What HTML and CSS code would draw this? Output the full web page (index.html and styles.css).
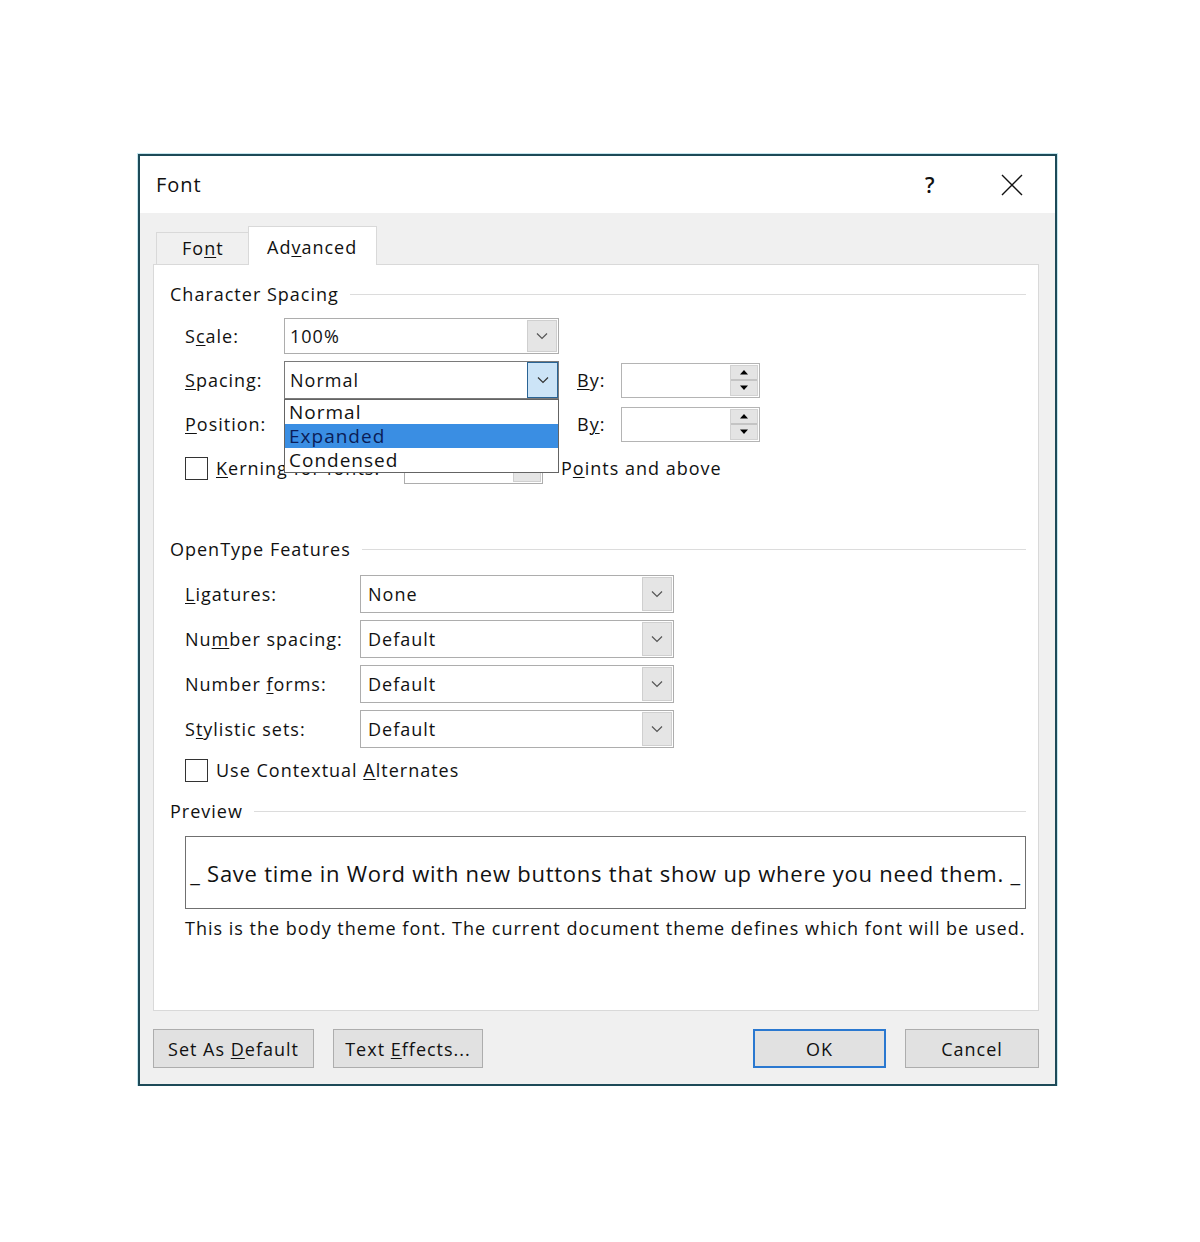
FILE: index.html
```html
<!DOCTYPE html>
<html>
<head>
<meta charset="utf-8">
<title>Font</title>
<link rel="stylesheet" href="styles.css">
</head>
<body>
<div class="dialog">
  <div class="titlebar">
    <span class="title">Font</span>
    <span class="help">?</span>
    <span class="close">
      <svg width="22" height="22" viewBox="0 0 22 22"><path d="M1 1 L21 21 M21 1 L1 21" stroke="#111" stroke-width="1.4" fill="none"/></svg>
    </span>
  </div>
  <div class="body">
    <div class="tabs">
      <div class="tab">Fo<u>n</u>t</div>
      <div class="tab active">Ad<u>v</u>anced</div>
    </div>
    <div class="panel">
      <div class="group-head"><span>Character Spacing</span><i class="rule"></i></div>
      <div class="rows cs">
        <div class="row">
          <span class="lbl lbl-cs">S<u>c</u>ale:</span>
          <div class="combo combo-cs"><span class="val">100%</span><span class="dd"><svg width="12" height="8" viewBox="0 0 12 8"><path d="M1 1.5 L6 6.5 L11 1.5" stroke="#555" stroke-width="1.2" fill="none"/></svg></span></div>
        </div>
        <div class="row spacing-row">
          <span class="lbl lbl-cs"><u>S</u>pacing:</span>
          <div class="combo combo-cs focused"><span class="val">Normal</span><span class="dd"><svg width="12" height="8" viewBox="0 0 12 8"><path d="M1 1.5 L6 6.5 L11 1.5" stroke="#333" stroke-width="1.2" fill="none"/></svg></span></div>
          <span class="by"><u>B</u>y:</span>
          <div class="spin"><span class="spin-val"></span><span class="spin-btns"><span class="sb"><svg width="10" height="6" viewBox="0 0 10 6"><path d="M1 5.5 L5 1 L9 5.5 Z" fill="#000"/></svg></span><span class="sb"><svg width="10" height="6" viewBox="0 0 10 6"><path d="M1 0.5 L5 5 L9 0.5 Z" fill="#000"/></svg></span></span></div>
          <div class="droplist">
            <div class="item">Normal</div>
            <div class="item sel">Expanded</div>
            <div class="item">Condensed</div>
          </div>
        </div>
        <div class="row">
          <span class="lbl lbl-cs"><u>P</u>osition:</span>
          <div class="combo combo-cs"><span class="val"></span><span class="dd"></span></div>
          <span class="by">B<u>y</u>:</span>
          <div class="spin"><span class="spin-val"></span><span class="spin-btns"><span class="sb"><svg width="10" height="6" viewBox="0 0 10 6"><path d="M1 5.5 L5 1 L9 5.5 Z" fill="#000"/></svg></span><span class="sb"><svg width="10" height="6" viewBox="0 0 10 6"><path d="M1 0.5 L5 5 L9 0.5 Z" fill="#000"/></svg></span></span></div>
        </div>
        <div class="row">
          <span class="check"></span>
          <span class="kern-lbl"><u>K</u>erning for fonts:</span>
          <div class="combo combo-kern"><span class="val"></span><span class="dd dd-dark"><svg width="10" height="6" viewBox="0 0 10 6"><path d="M1 0.5 L5 5 L9 0.5 Z" fill="#000"/></svg></span></div>
          <span class="pts">P<u>o</u>ints and above</span>
        </div>
      </div>

      <div class="group-head gh-ot"><span>OpenType Features</span><i class="rule"></i></div>
      <div class="rows ot">
        <div class="row row-ot">
          <span class="lbl lbl-ot"><u>L</u>igatures:</span>
          <div class="combo combo-ot"><span class="val">None</span><span class="dd"><svg width="12" height="8" viewBox="0 0 12 8"><path d="M1 1.5 L6 6.5 L11 1.5" stroke="#555" stroke-width="1.2" fill="none"/></svg></span></div>
        </div>
        <div class="row row-ot">
          <span class="lbl lbl-ot">Nu<u>m</u>ber spacing:</span>
          <div class="combo combo-ot"><span class="val">Default</span><span class="dd"><svg width="12" height="8" viewBox="0 0 12 8"><path d="M1 1.5 L6 6.5 L11 1.5" stroke="#555" stroke-width="1.2" fill="none"/></svg></span></div>
        </div>
        <div class="row row-ot">
          <span class="lbl lbl-ot">Number <u>f</u>orms:</span>
          <div class="combo combo-ot"><span class="val">Default</span><span class="dd"><svg width="12" height="8" viewBox="0 0 12 8"><path d="M1 1.5 L6 6.5 L11 1.5" stroke="#555" stroke-width="1.2" fill="none"/></svg></span></div>
        </div>
        <div class="row row-ot">
          <span class="lbl lbl-ot">S<u>t</u>ylistic sets:</span>
          <div class="combo combo-ot"><span class="val">Default</span><span class="dd"><svg width="12" height="8" viewBox="0 0 12 8"><path d="M1 1.5 L6 6.5 L11 1.5" stroke="#555" stroke-width="1.2" fill="none"/></svg></span></div>
        </div>
        <div class="row row-ctx">
          <span class="check"></span>
          <span class="ctx-lbl">Use Contextual <u>A</u>lternates</span>
        </div>
      </div>

      <div class="group-head gh-pv"><span>Preview</span><i class="rule"></i></div>
      <div class="preview">_ Save time in Word with new buttons that show up where you need them. _</div>
      <div class="desc">This is the body theme font. The current document theme defines which font will be used.</div>
    </div>

    <div class="buttons">
      <button class="btn btn-default">Set As <u>D</u>efault</button>
      <button class="btn btn-effects">Text <u>E</u>ffects...</button>
      <span class="spacer"></span>
      <button class="btn btn-ok">OK</button>
      <button class="btn btn-cancel">Cancel</button>
    </div>
  </div>
</div>
</body>
</html>
```

FILE: styles.css
```css
* { box-sizing: border-box; }
html, body { margin: 0; padding: 0; background: #fff; }
body {
  font-family: "Open Sans", "Noto Sans", sans-serif;
  font-size: 18px;
  letter-spacing: 1px;
  color: #111;
}
u { text-decoration: underline; text-underline-offset: 2px; text-decoration-thickness: 1px; }

.dialog {
  margin: 154px 0 0 138px;
  width: 919px;
  height: 932px;
  border: 2px solid #1d4a58;
  box-shadow: 0 0 0 1px #c5e6ee;
  display: flex;
  flex-direction: column;
  background: #f0f0f0;
}

.titlebar {
  height: 57px;
  background: #fff;
  display: flex;
  align-items: center;
  padding-left: 16px;
  flex-shrink: 0;
}
.title { font-size: 20px; flex: 1; }
.help { font-size: 21px; font-weight: 600; width: 20px; margin-right: 56px; letter-spacing: 0; }
.close { width: 22px; height: 22px; margin-right: 32px; display: flex; }

.body {
  flex: 1;
  display: flex;
  flex-direction: column;
  padding: 13px 16px 16px 13px;
}

.tabs {
  display: flex;
  align-items: flex-end;
  height: 38px;
  padding-left: 3px;
  position: relative;
  z-index: 2;
}
.tab {
  height: 32px;
  width: 92px;
  border: 1px solid #d9d9d9;
  border-bottom: none;
  border-right: none;
  background: #f0f0f0;
  display: flex;
  align-items: center;
  padding-left: 25px;
  padding-bottom: 2px;
}
.tab.active {
  height: 39px;
  width: 129px;
  background: #fff;
  border-right: 1px solid #d9d9d9;
  padding-left: 18px;
  margin-bottom: -1px;
  padding-top: 1px;
  padding-bottom: 0;
}

.panel {
  height: 747px;
  background: #fff;
  border: 1px solid #d9d9d9;
  padding: 15px 12px 0 16px;
  display: flex;
  flex-direction: column;
}

.group-head {
  height: 28px;
  display: flex;
  align-items: center;
}
.group-head .rule {
  flex: 1;
  border-top: 1px solid #dcdcdc;
  margin-left: 11px;
}
.gh-ot { margin-top: 45px; }
.gh-pv { margin-top: 8px; }

.rows { padding-left: 15px; }
.rows.cs { margin-top: 6px; }
.rows.ot { margin-top: 8px; }

.row {
  height: 44px;
  display: flex;
  align-items: center;
  position: relative;
}
.row-ot { height: 45px; }
.row-ctx { height: 38px; }

.lbl-cs { width: 99px; }
.lbl-ot { width: 175px; }

.combo {
  display: flex;
  height: 36px;
  border: 1px solid #adadad;
  background: #fff;
  align-items: stretch;
}
.combo .val {
  flex: 1;
  display: flex;
  align-items: center;
  padding-left: 5px;
}
.combo .dd {
  width: 30px;
  background: #e5e5e5;
  border: 1px solid #cfcfcf;
  margin: 1px;
  display: flex;
  align-items: center;
  justify-content: center;
}
.combo-cs { width: 275px; }
.combo-cs.focused { border-color: #7a7a7a; height: 38px; }
.combo-cs.focused .dd {
  background: #cce4f7;
  border: 1px solid #2a6495;
  margin: 0;
  width: 31px;
}
.combo-ot { width: 314px; height: 38px; padding-left: 2px; }

.by { width: 44px; margin-left: 18px; }
.spin {
  width: 139px;
  height: 35px;
  border: 1px solid #b4b4b4;
  background: #fff;
  display: flex;
  padding: 1px;
}
.spin-val { flex: 1; }
.spin-btns {
  width: 28px;
  display: flex;
  flex-direction: column;
  gap: 2px;
  background: #c4c4c4;
  border: 1px solid #d2d2d2;
}
.sb {
  flex: 1;
  background: #e4e4e4;
  display: flex;
  align-items: center;
  justify-content: center;
}

.check {
  width: 23px;
  height: 23px;
  border: 1px solid #333;
  background: #fff;
  margin-right: 8px;
}
.kern-lbl { width: 188px; white-space: nowrap; }
.ctx-lbl { white-space: nowrap; }
.combo-kern { width: 139px; height: 32px; }
.combo-kern .dd { width: 28px; }
.pts { margin-left: 18px; }

.droplist {
  position: absolute;
  left: 99px;
  top: 41px;
  width: 275px;
  border: 1px solid #646464;
  background: #fff;
  z-index: 5;
}
.droplist .item {
  height: 24px;
  line-height: 24px;
  padding-left: 4px;
  font-size: 19px;
}
.droplist .item.sel { background: #3a8ee3; color: #0b1d57; }

.preview {
  margin: 11px 0 0 15px;
  height: 73px;
  border: 1px solid #707070;
  display: flex;
  align-items: center;
  justify-content: center;
  font-size: 22px;
  letter-spacing: 0.75px;
  white-space: nowrap;
}
.desc {
  margin: 5px 0 0 15px;
  height: 28px;
  display: flex;
  align-items: center;
  white-space: nowrap;
}

.buttons {
  margin-top: 18px;
  display: flex;
  height: 39px;
}
.spacer { flex: 1; }
.btn {
  font-family: inherit;
  font-size: 18px;
  letter-spacing: 1px;
  color: #111;
  height: 39px;
  background: #e1e1e1;
  border: 1px solid #adadad;
  padding: 0;
  margin: 0;
}
.btn-default { width: 161px; }
.btn-effects { width: 150px; margin-left: 19px; }
.btn-ok { width: 133px; border: 2px solid #2a78d0; }
.btn-cancel { width: 134px; margin-left: 19px; }
```
